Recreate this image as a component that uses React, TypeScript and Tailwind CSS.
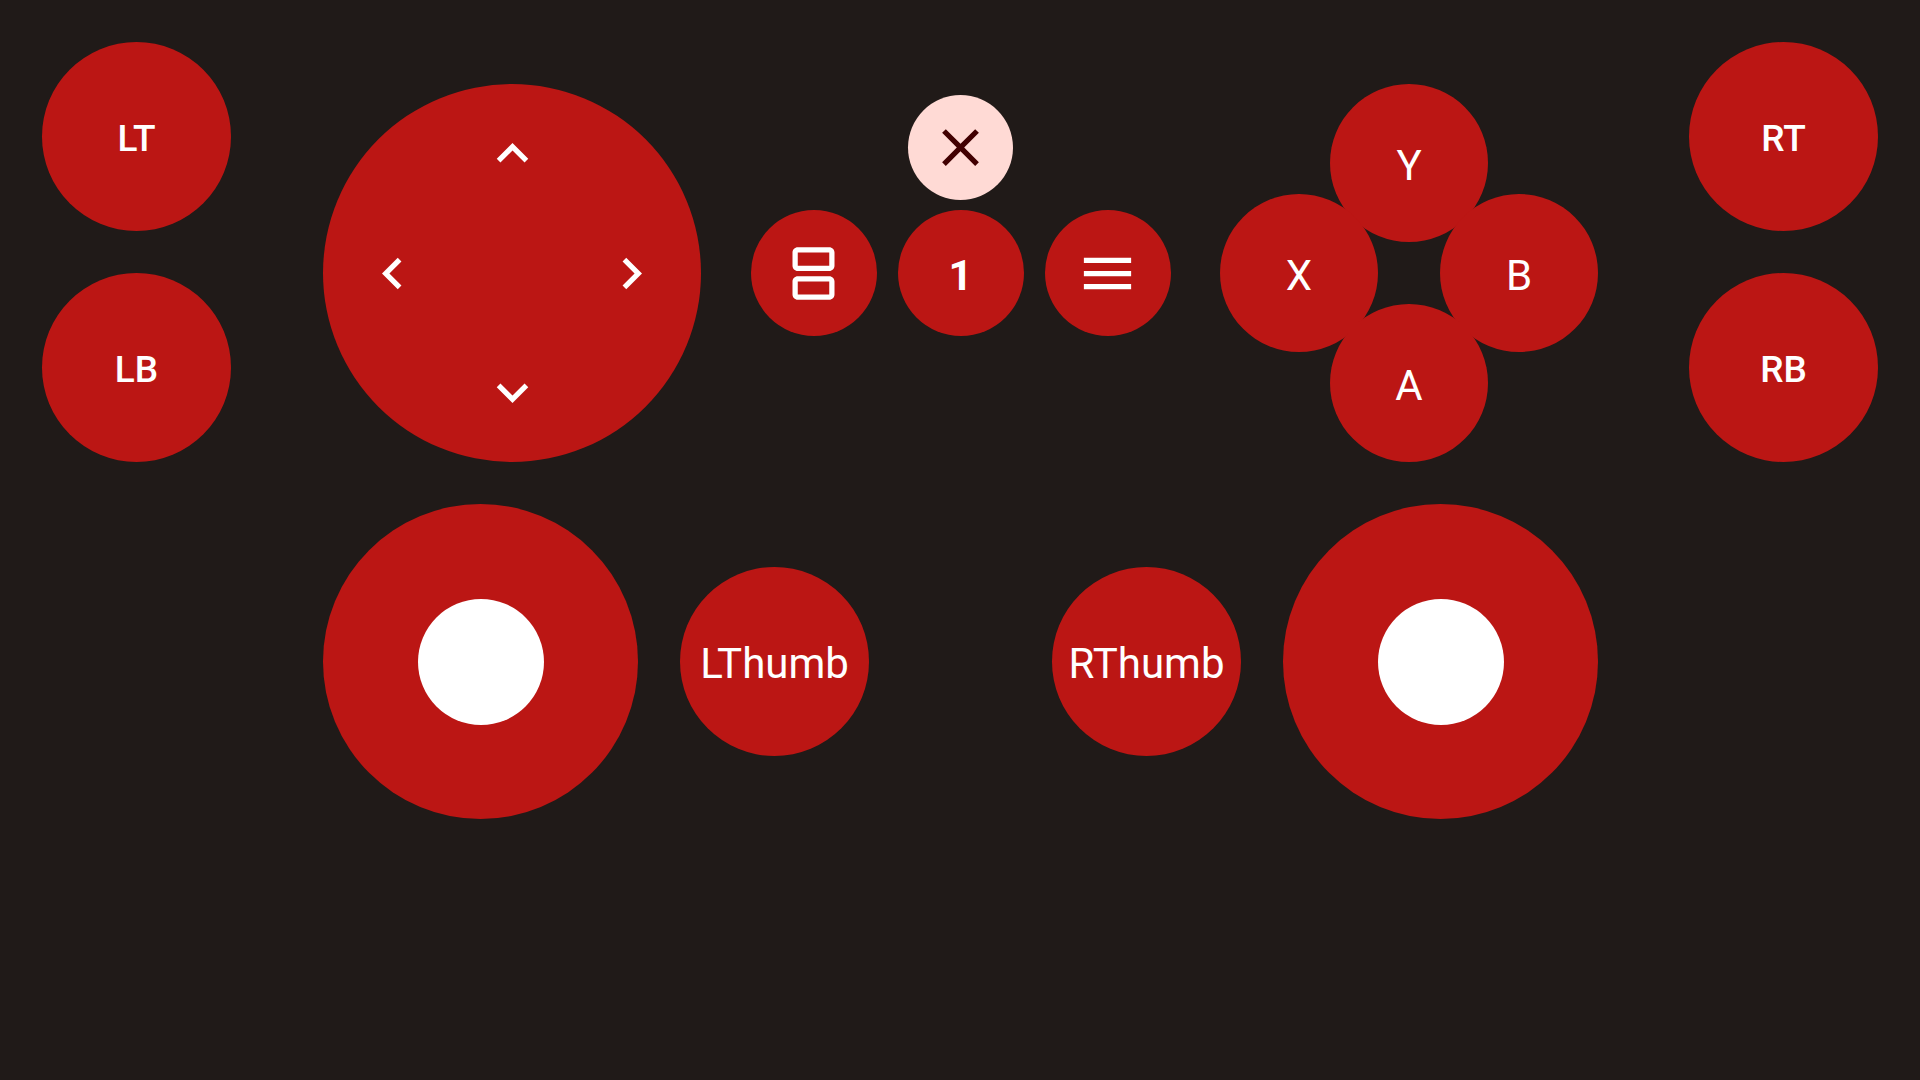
import clsx from "clsx";
import React from "react";

const icons = {
  up: "M7.41 15.41L12 10.83l4.59 4.58L18 14l-6-6-6 6z",
  down: "M7.41 8.59L12 13.17l4.59-4.58L18 10l-6 6-6-6z",
  left: "M15.41 16.59L10.83 12l4.58-4.59L14 6l-6 6 6 6z",
  right: "M8.59 16.59L13.17 12 8.59 7.41 10 6l6 6-6 6z",
  close:
    "M19 6.41L17.59 5 12 10.59 6.41 5 5 6.41 10.59 12 5 17.59 6.41 19 12 13.41 17.59 19 19 17.59 13.41 12z",
  menu: "M3 18h18v-2H3v2zm0-5h18v-2H3v2zm0-7v2h18V6H3z",
  split:
    "M18 4v5H6V4h12m0-2H6c-1.1 0-2 .9-2 2v5c0 1.1.9 2 2 2h12c1.1 0 2-.9 2-2V4c0-1.1-.9-2-2-2zm0 13v5H6v-5h12m0-2H6c-1.1 0-2 .9-2 2v5c0 1.1.9 2 2 2h12c1.1 0 2-.9 2-2v-5c0-1.1-.9-2-2-2z",
};

const Icon = ({ name }: { name: keyof typeof icons }) => (
  <svg viewBox="0 0 24 24" fill="currentColor" className="size-[63px]" aria-hidden="true">
    <path d={icons[name]} />
  </svg>
);

type PadButtonProps = {
  className: string;
  label?: string;
  children?: React.ReactNode;
};

const PadButton = ({ className, label, children }: PadButtonProps) => (
  <button
    type="button"
    aria-label={label}
    className={clsx(
      "flex shrink-0 items-center justify-center rounded-full",
      className
    )}
  >
    {children}
  </button>
);

const Shoulder = ({ names }: { names: string[] }) => (
  <div className="flex flex-col gap-[42px]">
    {names.map((name) => (
      <PadButton
        key={name}
        className="size-[189px] bg-[#bb1614] pt-1 text-[37px] font-medium"
      >
        {name}
      </PadButton>
    ))}
  </div>
);

const DPad = () => (
  <div className="flex size-[378px] shrink-0 flex-col items-center justify-between rounded-full bg-[#bb1614] p-[38px]">
    <button type="button" aria-label="Up">
      <Icon name="up" />
    </button>
    <div className="flex w-full justify-between">
      <button type="button" aria-label="Left">
        <Icon name="left" />
      </button>
      <button type="button" aria-label="Right">
        <Icon name="right" />
      </button>
    </div>
    <button type="button" aria-label="Down">
      <Icon name="down" />
    </button>
  </div>
);

const SystemButtons = () => (
  <div className="flex flex-col items-center gap-2.5 pt-[11px]">
    <PadButton label="Close" className="size-[105px] bg-[#ffdad5] text-[#410001]">
      <Icon name="close" />
    </PadButton>
    <div className="flex gap-[21px]">
      <PadButton label="View" className="size-[126px] bg-[#bb1614]">
        <Icon name="split" />
      </PadButton>
      <PadButton className="size-[126px] bg-[#bb1614] pt-1 text-[42px] font-bold">
        1
      </PadButton>
      <PadButton label="Menu" className="size-[126px] bg-[#bb1614]">
        <Icon name="menu" />
      </PadButton>
    </div>
  </div>
);

// the outer tracks are narrower than a button, so neighbours overlap a little
const faceButtons = [
  { name: "Y", cell: "col-start-2 row-start-1" },
  { name: "X", cell: "col-start-1 row-start-2" },
  { name: "B", cell: "col-start-3 row-start-2 justify-self-end" },
  { name: "A", cell: "col-start-2 row-start-3 self-end" },
];

const FaceButtons = () => (
  <div className="grid shrink-0 grid-cols-[110px_158px_110px] grid-rows-[110px_158px_110px]">
    {faceButtons.map(({ name, cell }) => (
      <PadButton
        key={name}
        className={clsx("size-[158px] bg-[#bb1614] pt-1 text-[42px]", cell)}
      >
        {name}
      </PadButton>
    ))}
  </div>
);

const Stick = ({ label }: { label: string }) => (
  <div className="flex size-[315px] shrink-0 items-center justify-center rounded-full bg-[#bb1614]">
    <PadButton label={label} className="size-[126px] bg-white" />
  </div>
);

const ThumbButton = ({ name }: { name: string }) => (
  <PadButton className="size-[189px] bg-[#bb1614] pt-1 text-[42px]">
    {name}
  </PadButton>
);

const App = () => {
  return (
    <main className="flex min-h-screen items-start bg-[#201a18] p-[42px] font-[Roboto,sans-serif] text-white">
      <Shoulder names={["LT", "LB"]} />
      <div className="mr-[91px] ml-[92px] flex flex-1 flex-col gap-[42px] pt-[42px]">
        <div className="flex items-start justify-between">
          <DPad />
          <SystemButtons />
          <FaceButtons />
        </div>
        <div className="flex items-center justify-between">
          <div className="flex items-center gap-[42px]">
            <Stick label="Left stick" />
            <ThumbButton name="LThumb" />
          </div>
          <div className="flex items-center gap-[42px]">
            <ThumbButton name="RThumb" />
            <Stick label="Right stick" />
          </div>
        </div>
      </div>
      <Shoulder names={["RT", "RB"]} />
    </main>
  );
};

export default App;
